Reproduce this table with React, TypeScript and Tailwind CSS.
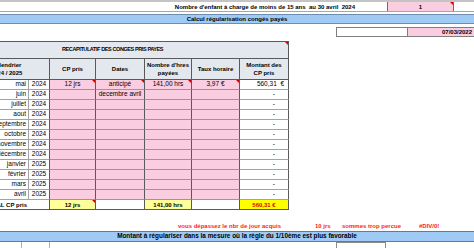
import React from "react";

// Petit triangle rouge (indicateur de commentaire Excel)
function Note() {
  return (
    <span className="absolute top-0 right-0 w-0 h-0 border-t-[3px] border-l-[3px] border-t-[#d60000] border-l-transparent" />
  );
}

const months: [string, string][] = [
  ["mai", "2024"],
  ["juin", "2024"],
  ["juillet", "2024"],
  ["aout", "2024"],
  ["septembre", "2024"],
  ["octobre", "2024"],
  ["novembre", "2024"],
  ["décembre", "2024"],
  ["janvier", "2025"],
  ["février", "2025"],
  ["mars", "2025"],
  ["avril", "2025"],
];

export default function App() {
  return (
    <div className="w-[474px] h-[248px] overflow-hidden bg-white text-black leading-none font-['Liberation_Sans',Arial,sans-serif]">
      {/* bord supérieur */}
      <div className="h-[2px] bg-[#c4c4c4]" />

      {/* ligne 1 : nombre d'enfants */}
      <div className="flex h-[10px] border-b border-[#a6a6a6]">
        <div className="w-[387px] flex items-center justify-end pr-[32px] text-[6px] font-bold whitespace-nowrap">
          Nombre d'enfant à charge de moins de 15 ans&nbsp; au 30 avril&nbsp; 2024
        </div>
        <div className="relative w-[67px] bg-[#fbcde1] border-x border-[#6b6b6b] flex items-center justify-center text-[6px] font-bold">
          1
          <Note />
        </div>
        <div className="flex-1" />
      </div>

      <div className="h-[2px]" />

      {/* bandeau bleu */}
      <div className="h-[10px] bg-[#9fcaf4] border-y border-[#6d8db0] flex items-center justify-center text-[6px] font-bold">
        Calcul régularisation congés payés
      </div>

      <div className="h-[3px]" />

      {/* date */}
      <div className="flex h-[10px] pl-[336px]">
        <div className="w-[72px] border border-[#7f7f7f]" />
        <div className="flex-1 bg-[#fbcde1] border-y border-[#7f7f7f] flex items-center justify-end pr-[2px] text-[6px] font-bold">
          07/03/2022
        </div>
      </div>

      <div className="h-[4px]" />

      {/* tableau récapitulatif */}
      <div className="ml-[-36px] w-[325px]">
        <div className="relative h-[18px] bg-[#e3e8ef] border-y border-r border-[#5a5a5a] flex items-center pl-[98px] text-[5.5px] font-bold tracking-[-0.4px] whitespace-nowrap">
          RECAPITULATIF DES CONGES PRIS PAYES
          <Note />
        </div>

        <div className="flex h-[21px] bg-[#e3e8ef] border-b border-[#5a5a5a] text-[6px] font-bold text-center">
          <div className="w-[86px] border-r border-[#5a5a5a] flex flex-col items-center justify-center gap-[2px]">
            <span>Calendrier</span>
            <span>2024 / 2025</span>
          </div>
          <div className="w-[46px] border-r border-[#5a5a5a] flex items-center justify-center">CP pris</div>
          <div className="w-[49px] border-r border-[#5a5a5a] flex items-center justify-center">Dates</div>
          <div className="w-[47px] border-r border-[#5a5a5a] flex flex-col items-center justify-center gap-[2px]">
            <span>Nombre d'hres</span>
            <span>payées</span>
          </div>
          <div className="w-[48px] border-r border-[#5a5a5a] flex items-center justify-center">Taux horaire</div>
          <div className="w-[49px] border-r border-[#5a5a5a] flex flex-col items-center justify-center gap-[2px]">
            <span>Montant des</span>
            <span>CP pris</span>
          </div>
        </div>

        {months.map(([m, y], i) => (
          <div key={m} className="flex h-[10px] text-[6.5px]">
            <div className="w-[65px] border-r border-b border-[#a3a3a3] flex items-center justify-end pr-[2px] overflow-hidden whitespace-nowrap">
              {m}
            </div>
            <div className="w-[21px] border-r border-b border-r-[#5a5a5a] border-b-[#a3a3a3] flex items-center justify-center">
              {y}
            </div>
            <div className="relative w-[46px] bg-[#fbcde1] border-r border-b border-r-[#5a5a5a] border-b-[#9c9699] flex items-center justify-center">
              {i === 0 && "12 jrs"}
              {i === 0 && <Note />}
            </div>
            <div className="relative w-[49px] bg-[#fbcde1] border-r border-b border-r-[#5a5a5a] border-b-[#9c9699] flex items-center justify-center whitespace-nowrap">
              {i === 0 && "anticipé"}
              {i === 1 && "decembre avril"}
              {i === 0 && <Note />}
            </div>
            <div className="relative w-[47px] bg-[#fbcde1] border-r border-b border-r-[#5a5a5a] border-b-[#9c9699] flex items-center justify-center">
              {i === 0 && "141,00 hrs"}
              {i === 0 && <Note />}
            </div>
            <div className="relative w-[48px] bg-[#fbcde1] border-r border-b border-r-[#5a5a5a] border-b-[#9c9699] flex items-center justify-center">
              {i === 0 && "3,97 €"}
              {i === 0 && <Note />}
            </div>
            <div className="w-[49px] border-r border-b border-r-[#5a5a5a] border-b-[#a3a3a3] flex items-center justify-end">
              {i === 0 ? <span className="pr-[4px]">560,31&nbsp; €</span> : <span className="pr-[13px]">-</span>}
            </div>
          </div>
        ))}

        {/* total */}
        <div className="flex h-[10px] text-[6px] font-bold border-b border-[#5a5a5a]">
          <div className="w-[86px] border-r border-[#5a5a5a] flex items-center justify-end pr-[22px] whitespace-nowrap">
            TOTAL CP pris
          </div>
          <div className="relative w-[46px] bg-[#ffff99] border-r border-[#5a5a5a] flex items-center justify-center">
            12 jrs
            <Note />
          </div>
          <div className="w-[49px] border-r border-[#5a5a5a]" />
          <div className="w-[47px] bg-[#ffff99] border-r border-[#5a5a5a] flex items-center justify-center">141,00 hrs</div>
          <div className="w-[48px] border-r border-[#5a5a5a]" />
          <div className="w-[49px] bg-[#ffff00] border-r border-[#5a5a5a] flex items-center justify-center text-[#e00000]">
            560,31 €
          </div>
        </div>
      </div>

      <div className="h-[11px]" />

      {/* messages en rouge */}
      <div className="relative h-[10px] text-[6px] font-bold text-[#ff1a1a] whitespace-nowrap">
        <span className="absolute left-[178px] top-[2px]">vous dépassez le nbr de jour acquis</span>
        <span className="absolute left-[315px] top-[2px]">10 jrs</span>
        <span className="absolute left-[342px] top-[2px]">sommes trop percue</span>
        <span className="absolute left-[419px] top-[2px]">#DIV/0!</span>
      </div>

      {/* bandeau bleu bas */}
      <div className="h-[11px] bg-[#9fcaf4] border-y border-[#5d7da0] flex items-center justify-center text-[6.4px] font-bold whitespace-nowrap">
        Montant à régulariser dans la mesure où la règle du 1/10ème est plus favorable
      </div>

      {/* début de la ligne suivante */}
      <div className="flex h-[6px]">
        <div className="w-[22px] border-r border-[#b0b0b0]" />
        <div className="w-[28px] border-r border-[#b0b0b0]" />
        <div className="w-[286px]" />
        <div className="w-[50px] border-x border-t border-[#8a8a8a]" />
      </div>
    </div>
  );
}
